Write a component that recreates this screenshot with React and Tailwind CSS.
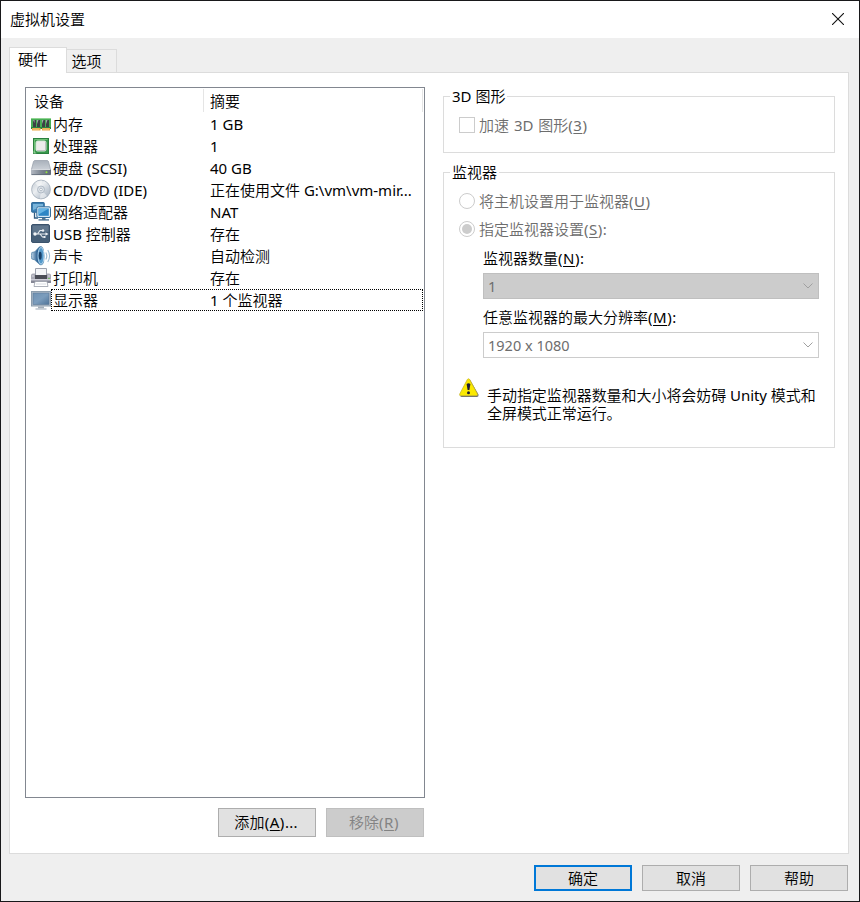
const devices = [
  { icon: MemoryIcon, name: '内存', summary: '1 GB' },
  { icon: CpuIcon, name: '处理器', summary: '1' },
  { icon: DiskIcon, name: '硬盘 (SCSI)', summary: '40 GB' },
  { icon: DiscIcon, name: 'CD/DVD (IDE)', summary: '正在使用文件 G:\\vm\\vm-mir...' },
  { icon: NetworkIcon, name: '网络适配器', summary: 'NAT' },
  { icon: UsbIcon, name: 'USB 控制器', summary: '存在' },
  { icon: SoundIcon, name: '声卡', summary: '自动检测' },
  { icon: PrinterIcon, name: '打印机', summary: '存在' },
  { icon: DisplayIcon, name: '显示器', summary: '1 个监视器', selected: true },
]

function Icon({ children }) {
  return (
    <svg width="20" height="22" viewBox="0 0 20 22" className="shrink-0">
      {children}
    </svg>
  )
}

function MemoryIcon() {
  return (
    <Icon>
      <path d="M0 5h20v11H0z" fill="#48ad55" />
      <path d="M0 5h20v1H0z" fill="#8fd391" />
      <path d="M0 14h20v2H0z" fill="#2a8341" />
      <path d="M2 7h3v7H2zM6 7h3v7H6zM11 7h3v7h-3zM15 7h3v7h-3z" fill="#3c4145" />
      <path d="M2 7h1.500v3zM6 7h1.500L6 11zM11 7h1.500L11 11zM15 7h1.500L15 11z" fill="#a2a7a8" />
      <path d="M1 15h8.500v2.500H1zM11 15h8v2.500h-8z" fill="#e9a649" />
      <path d="M3 15.500v2M5 15.500v2M7 15.500v2M13 15.500v2M15 15.500v2M17 15.500v2" stroke="#fbe0a8" strokeWidth=".7" />
    </Icon>
  )
}

function CpuIcon() {
  return (
    <Icon>
      <rect x="2.500" y="3.500" width="15" height="15" fill="#38974c" stroke="#2a803e" />
      <path d="M3.500 17.500v-13h13" stroke="#6fc276" fill="none" />
      <rect x="5" y="6" width="10" height="10" rx="1.500" fill="#ececec" stroke="#d5e8d6" />
      <path d="M14.500 7v8.500H6" stroke="#bfc2c2" fill="none" />
      <path d="M2.500 15.500l3 3h-3z" fill="#8dcc91" />
    </Icon>
  )
}

function DiskIcon() {
  return (
    <Icon>
      <defs>
        <linearGradient id="disk" x2="0" y2="1">
          <stop stopColor="#a9b1bb" />
          <stop offset="1" stopColor="#ccd1d8" />
        </linearGradient>
        <linearGradient id="diskFront">
          <stop stopColor="#b4bac3" />
          <stop offset=".5" stopColor="#7d8692" />
          <stop offset="1" stopColor="#5e6875" />
        </linearGradient>
      </defs>
      <path d="M4 3.500h12q1 0 1.500 1L19.700 13H.3L2.500 4.500q.5-1 1.500-1" fill="url(#disk)" stroke="#939ca7" strokeWidth=".7" />
      <path d="M0 12h20v5q0 1-1 1H1q-1 0-1-1z" fill="url(#diskFront)" />
      <path d="M.5 12.500h19" stroke="#d5d9de" />
      <path d="M.5 17.600h19" stroke="#5e6876" strokeWidth=".8" />
      <circle cx="15.500" cy="15.300" r="1" fill="#95e83c" />
    </Icon>
  )
}

function DiscIcon() {
  return (
    <Icon>
      <defs>
        <linearGradient id="disc" x2="1" y2="1">
          <stop stopColor="#bfc7d0" />
          <stop offset=".4" stopColor="#eceff2" />
          <stop offset=".65" stopColor="#c8d0d9" />
          <stop offset="1" stopColor="#a0adbb" />
        </linearGradient>
      </defs>
      <circle cx="10" cy="10.500" r="9.400" fill="url(#disc)" stroke="#9fabb8" strokeWidth=".8" />
      <path d="M10 10.500L4 4q3-3 7-2.500zM10 10.500l6 6.500q-3 2.500-7 2.500z" fill="#fff" opacity=".5" />
      <circle cx="10" cy="10.500" r="3.500" fill="#dce2e8" stroke="#a5b0bc" strokeWidth=".8" />
      <circle cx="10" cy="10.500" r="1.300" fill="#fff" stroke="#8d9aa9" strokeWidth=".6" />
    </Icon>
  )
}

function NetworkIcon() {
  return (
    <Icon>
      <rect x=".7" y="1.700" width="12.500" height="9.500" rx="1" fill="#3f83b7" stroke="#2f6b9b" strokeWidth="1.200" />
      <path d="M2 3h10v2L2 9z" fill="#79b4da" />
      <path d="M3.500 11.500V17H7" fill="none" stroke="#315b80" strokeWidth="1.300" />
      <rect x="5.800" y="5.800" width="13.700" height="10.700" rx="1.500" fill="#d6e8f4" stroke="#346e9d" />
      <rect x="7.500" y="7.500" width="10.300" height="7.300" fill="#2e86c5" />
      <path d="M7.500 7.500h10.300L7.500 13.500z" fill="#68b5e4" />
      <path d="M11 17h3.500v2H11z" fill="#58748d" />
      <path d="M7.500 18.900h10.500" stroke="#4f7697" strokeWidth="1.400" />
    </Icon>
  )
}

function UsbIcon() {
  return (
    <Icon>
      <rect x=".5" y="1.500" width="18" height="18" rx="1.500" fill="#465f78" stroke="#3b536c" />
      <path d="M1.500 2.500h16v6q-8 0-16 3z" fill="#60778e" />
      <path d="M4 11h12M6.500 11L9 7.500h3M9 11l2.500 3H14" fill="none" stroke="#e9edf1" strokeWidth="1.100" />
      <circle cx="4" cy="11" r="1.700" fill="#f2f5f7" />
      <circle cx="12" cy="7.500" r="1.200" fill="#e9edf1" />
      <path d="M12.500 13h2v2h-2zM14.500 9.200l3 1.800-3 1.800z" fill="#e9edf1" />
    </Icon>
  )
}

function SoundIcon() {
  return (
    <Icon>
      <defs>
        <linearGradient id="cone">
          <stop stopColor="#c2d7e8" />
          <stop offset=".45" stopColor="#2d6294" />
          <stop offset="1" stopColor="#79b9e4" />
        </linearGradient>
      </defs>
      <path d="M.8 7.500q-.8 3 0 6.500l2.700.8 5.500 5q2.500.8 3.500-2.300 1.500-6-.3-13.500Q11 .5 8.500 1.800L3.800 6.800z" fill="url(#cone)" stroke="#487ba4" strokeWidth=".7" />
      <ellipse cx="10" cy="10.800" rx="3" ry="8.300" fill="#5399cb" stroke="#c5e0f2" strokeWidth=".8" />
      <ellipse cx="9.200" cy="10.800" rx="1.500" ry="4" fill="#173f68" />
      <path d="M14.800 7.500q2 3.500 0 7M16.800 5q3.500 6 0 12" fill="none" stroke="#9dbcd3" strokeWidth="1.100" />
    </Icon>
  )
}

function PrinterIcon() {
  return (
    <Icon>
      <path d="M4.500 9V1.500h11V9" fill="#f4f5f8" stroke="#9da2ae" />
      <path d="M2 6.500h2V9h12V6.500h2q2 0 2 2V16H0V8.500q0-2 2-2" fill="#a9aab6" />
      <path d="M1 9h2M17 9h2" stroke="#d6d7df" />
      <path d="M4 8h12v4H4z" fill="#4a4c56" />
      <path d="M0 12.500h20" stroke="#cccdd6" />
      <path d="M0 15h20" stroke="#858795" strokeWidth="2" />
      <path d="M4 14.500h12l1 5H3z" fill="#fff" stroke="#989da8" strokeWidth=".8" />
      <path d="M5 17h10" stroke="#d9dce2" />
      <path d="M17 11h2v1h-2z" fill="#76bb64" />
    </Icon>
  )
}

function DisplayIcon() {
  return (
    <Icon>
      <defs>
        <linearGradient id="screen" x2="1" y2="1">
          <stop stopColor="#6f92b4" />
          <stop offset=".5" stopColor="#7c9dbd" />
          <stop offset="1" stopColor="#4f7499" />
        </linearGradient>
      </defs>
      <rect x=".5" y="2.500" width="19" height="14.500" fill="#b5c1cd" stroke="#8c9dad" />
      <rect x="2" y="4" width="16" height="11.500" fill="url(#screen)" stroke="#5e7b98" strokeWidth=".6" />
      <path d="M7 17.500h6v2H7z" fill="#a2adb8" />
      <path d="M4.500 20h11" stroke="#bcc5ce" strokeWidth="1.500" />
    </Icon>
  )
}

function WarningIcon() {
  return (
    <svg width="20" height="20" viewBox="0 0 20 20" className="shrink-0">
      <path d="M10 1.500q1 0 1.500 1l8 14q.5 2-1.500 2.500H3q-2 0-1.500-1.500" fill="#656778" />
      <path d="M9.500.8q.8 0 1.200.8l7.800 14.500q.4 1.700-1.200 1.700H1.800Q.2 17.800.7 16.100L8.300 1.600q.4-.8 1.200-.8" fill="#fbe900" stroke="#c9b82b" strokeWidth=".8" />
      <path d="M7.600 6q1.900-1.500 3.800 0l-1 6H8.600z" fill="#1c1b35" />
      <circle cx="9.500" cy="14.700" r="1.500" fill="#1c1b35" />
    </svg>
  )
}

function Key({ children }) {
  return (
    <span className="tracking-[0.5px]">
      (<span className="underline decoration-1 underline-offset-2">{children}</span>)
    </span>
  )
}

function Button({ children, className }) {
  return <button className={`w-[98px] border ${className}`}>{children}</button>
}

function Group({ title, className, children }) {
  return (
    <section className={`border border-[#dcdcdc] ${className}`}>
      <h2 className="-mt-[11px] ml-1.5 h-5 w-fit bg-white px-0.5">{title}</h2>
      {children}
    </section>
  )
}

function Select({ value, className }) {
  return (
    <div className={`mt-[5px] flex h-[26px] w-[336px] items-center justify-between border pr-[5px] pl-1 text-[#6d6d6d] ${className}`}>
      <span className="pb-px text-[14.5px]">{value}</span>
      <svg width="10" height="6" viewBox="0 0 10 6" fill="none" stroke="#a0a0a0">
        <path d="M.5.5L5 5 9.500.5" />
      </svg>
    </div>
  )
}

export default function App() {
  return (
    <div className="flex h-[902px] w-[860px] flex-col overflow-hidden border border-[#18181a] bg-[#efefef] font-['Noto_Sans','Noto_Sans_CJK_SC_DemiLight','Noto_Sans_CJK_SC_Light','Noto_Sans_CJK_SC',sans-serif] text-[15px] leading-5 font-normal whitespace-nowrap text-black">
      <header className="flex h-[37px] shrink-0 items-center justify-between bg-white pr-[15px] pl-[9px]">
        <h1 className="pb-0.5">虚拟机设置</h1>
        <svg width="12" height="12" viewBox="0 0 12 12" stroke="#111" strokeWidth="1.100" className="mb-0.5">
          <path d="M0 0l12 12M12 0L0 12" />
        </svg>
      </header>

      <nav className="mt-[9px] ml-2 flex h-[25px] items-end">
        <button className="relative z-10 -mb-px h-[26px] w-[58px] border border-b-0 border-[#dcdcdc] bg-white pr-2.5 pb-1">硬件</button>
        <button className="-ml-px h-[23px] w-[51px] border border-b-0 border-[#dcdcdc] bg-[#f0f0f0] pr-2.5">选项</button>
      </nav>

      <main className="ml-2 flex h-[782px] w-[840px] shrink-0 border border-[#dcdcdc] bg-white">
        <div className="mt-3.5 ml-[15px] w-[400px]">
          <div className="h-[711px] border border-[#828790]">
            <div className="flex h-[25px] pt-px pr-px">
              <div className="h-[23px] w-[178px] border-r border-[#e5e5e5] pl-2 leading-6">设备</div>
              <div className="h-[23px] flex-1 border-r border-[#e5e5e5] pl-1.5 leading-6">摘要</div>
            </div>
            {devices.map(({ icon: DeviceIcon, name, summary, selected }) => (
              <div key={name} className="flex h-[22px] pr-px pl-[5px]">
                <DeviceIcon />
                <div className={`flex flex-1 border border-dotted ${selected ? 'border-black' : 'border-transparent'}`}>
                  <span className="w-[158px] pl-px">{name}</span>
                  <span>{summary}</span>
                </div>
              </div>
            ))}
          </div>
          <div className="mt-2.5 mr-px flex justify-end gap-2.5">
            <Button className="h-[29px] border-[#adadad] bg-[#e1e1e1] pr-0.5 pb-0.5 tracking-[0.3px]">添加<Key>A</Key>...</Button>
            <Button className="h-[29px] border-[#bfbfbf] bg-[#cccccc] pr-0.5 pb-0.5 text-[#838383]">移除<Key>R</Key></Button>
          </div>
        </div>

        <div className="mt-[23px] ml-[18px] w-[392px]">
          <Group title="3D 图形" className="h-[57px]">
            <label className="mt-[9px] ml-[15px] flex items-center gap-1 text-[#6d6d6d]">
              <span className="h-4 w-4 border border-[#cccccc]" />
              <span className="[word-spacing:1px]">加速 3D 图形<Key>3</Key></span>
            </label>
          </Group>
          <Group title="监视器" className="mt-[19px] h-[276px]">
            <label className="mt-[9px] ml-[15px] flex items-center gap-1 text-[#6d6d6d]">
              <span className="h-4 w-4 rounded-full border border-[#cccccc]" />
              <span>将主机设置用于监视器<Key>U</Key></span>
            </label>
            <label className="mt-2 ml-[15px] flex items-center gap-1 text-[#6d6d6d]">
              <span className="flex h-4 w-4 items-center justify-center rounded-full border border-[#cccccc]">
                <span className="h-2.5 w-2.5 rounded-full bg-[#cccccc]" />
              </span>
              <span>指定监视器设置<Key>S</Key>:</span>
            </label>
            <div className="mt-[9px] ml-[39px]">
              <p>监视器数量<Key>N</Key>:</p>
              <Select value="1" className="border-[#bfbfbf] bg-[#cccccc]" />
              <p className="mt-2">任意监视器的最大分辨率<Key>M</Key>:</p>
              <Select value="1920 x 1080" className="border-[#cccccc] bg-white" />
            </div>
            <div className="mt-5 ml-[15px] flex gap-2">
              <WarningIcon />
              <p className="mt-2 w-[332px] leading-[18px] tracking-[-0.05px] whitespace-normal">
                手动指定监视器数量和大小将会妨碍 Unity 模式和全屏模式正常运行。
              </p>
            </div>
          </Group>
        </div>
      </main>

      <footer className="mt-[11px] mr-[11px] flex justify-end gap-2.5">
        <Button className="h-[26px] border-2 border-[#0078d7] bg-[#e1e1e1]">确定</Button>
        <Button className="h-[26px] border-[#adadad] bg-[#e1e1e1]">取消</Button>
        <Button className="h-[26px] border-[#adadad] bg-[#e1e1e1]">帮助</Button>
      </footer>
    </div>
  )
}
